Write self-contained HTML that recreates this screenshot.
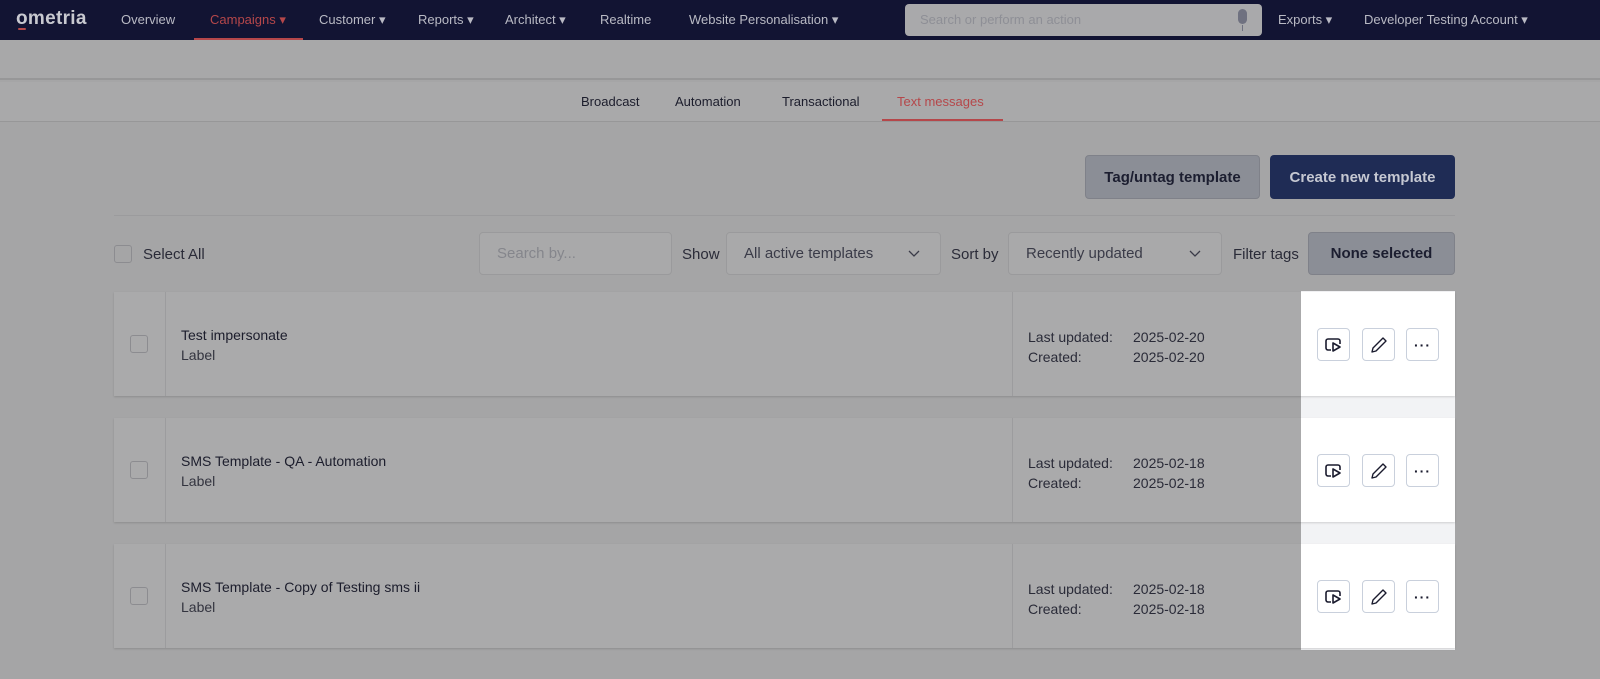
<!DOCTYPE html>
<html><head><style>
*{box-sizing:border-box;margin:0;padding:0}
body{width:1600px;height:679px;overflow:hidden;background:#a5a5a6;font-family:"Liberation Sans",sans-serif;position:relative;color:#1a1b2e}
.abs{position:absolute}
.nav{left:0;top:0;width:1600px;height:40px;background:#121433}
.nav span{position:absolute;top:12px;font-size:13px;color:#b9bac4}
.btn{position:absolute;border-radius:4px;font-weight:bold;font-size:15px;display:flex;align-items:center;justify-content:center}
.sel{position:absolute;border:1px solid #9a9a9c;border-radius:4px;background:#a9a9aa;font-size:15px;color:#3a3b48;padding-left:17px;display:flex;align-items:center}
.sel svg{position:absolute;right:20px;top:17px}
.card{position:absolute;left:114px;width:1341px;height:104px;background:#aaaaab;box-shadow:0 1px 2px rgba(0,0,0,.15)}
.card .cb{position:absolute;left:16px;top:43px;width:18px;height:18px;border:1.5px solid #8c8c90;border-radius:3px}
.card .v1{position:absolute;left:51px;top:0;width:1px;height:104px;background:#9c9c9e}
.card .v2{position:absolute;left:898px;top:0;width:1px;height:104px;background:#9c9c9e}
.card .t{position:absolute;left:67px;top:35px;font-size:14px;color:#1c1d2c}
.card .l{position:absolute;left:67px;top:55px;font-size:14px;color:#33343f}
.card .d{position:absolute;left:914px;top:35px;font-size:14px;line-height:20px;color:#2a2b38}
.card .d2{position:absolute;left:1019px;top:35px;font-size:14px;line-height:20px;color:#2a2b38}
.wh{position:absolute;left:1301px;width:154px;height:104px;background:#fff}
.ib{position:absolute;top:36px;width:33px;height:33px;border:1px solid #c9d0dc;border-radius:4px;background:#fff;display:flex;align-items:center;justify-content:center}
</style></head><body>
<div class="abs nav">
<span style="left:16px;top:8px;font-size:19px;font-weight:bold;color:#c8c9d0;letter-spacing:0.3px">ometria</span>
<div class="abs" style="left:18px;top:28px;width:8px;height:2px;background:#b84a4a;border-radius:1px"></div>
<span style="left:121px">Overview</span>
<span style="left:210px;color:#b5474a">Campaigns ▾</span>
<div class="abs" style="left:194px;top:38px;width:109px;height:2px;background:#b5474a"></div>
<span style="left:319px">Customer ▾</span>
<span style="left:418px">Reports ▾</span>
<span style="left:505px">Architect ▾</span>
<span style="left:600px">Realtime</span>
<span style="left:689px">Website Personalisation ▾</span>
<div class="abs" style="left:905px;top:4px;width:357px;height:32px;background:#a9a9ab;border-radius:4px"></div>
<span style="left:920px;top:12px;color:#8e8f96">Search or perform an action</span>
<div class="abs" style="left:1238px;top:9px;width:9px;height:15px;border-radius:5px;background:#6f7180"></div>
<div class="abs" style="left:1242px;top:25px;width:1px;height:6px;background:#6f7180"></div>
<span style="left:1278px">Exports ▾</span>
<span style="left:1364px">Developer Testing Account ▾</span>
</div>
<div class="abs" style="left:0;top:40px;width:1600px;height:40px;background:#a8a8a9;border-bottom:2px solid #979798"></div>
<div class="abs" style="left:0;top:82px;width:1600px;height:40px;background:#a9a9aa;border-bottom:1px solid #979798"></div>
<div class="abs" style="top:94px;left:581px;font-size:13px;color:#1c1d2c">Broadcast</div>
<div class="abs" style="top:94px;left:675px;font-size:13px;color:#1c1d2c">Automation</div>
<div class="abs" style="top:94px;left:782px;font-size:13px;color:#1c1d2c">Transactional</div>
<div class="abs" style="top:94px;left:897px;font-size:13px;color:#b5474a">Text messages</div>
<div class="abs" style="left:882px;top:119px;width:121px;height:2px;background:#b5474a"></div>
<div class="btn" style="left:1085px;top:155px;width:175px;height:44px;background:#8b8e96;border:1px solid #7f8189;color:#1c1e30">Tag/untag template</div>
<div class="btn" style="left:1270px;top:155px;width:185px;height:44px;background:#1f2c55;color:#c5c8d2">Create new template</div>
<div class="abs" style="left:114px;top:215px;width:1341px;height:1px;background:#9b9b9d"></div>
<div class="abs" style="left:114px;top:245px;width:18px;height:18px;border:1.5px solid #8c8c90;border-radius:3px"></div>
<div class="abs" style="left:143px;top:246px;font-size:15px;color:#2a2b38">Select All</div>
<div class="sel" style="left:479px;top:232px;width:193px;height:43px;color:#85868c">Search by...</div>
<div class="abs" style="left:682px;top:246px;font-size:15px;color:#2a2b38">Show</div>
<div class="sel" style="left:726px;top:232px;width:215px;height:43px">All active templates<svg width="12" height="8" viewBox="0 0 12 8" fill="none" stroke="#3a3b48" stroke-width="1.3"><path d="M1 1l5 5 5-5"/></svg></div>
<div class="abs" style="left:951px;top:246px;font-size:15px;color:#2a2b38">Sort by</div>
<div class="sel" style="left:1008px;top:232px;width:214px;height:43px">Recently updated<svg width="12" height="8" viewBox="0 0 12 8" fill="none" stroke="#3a3b48" stroke-width="1.3"><path d="M1 1l5 5 5-5"/></svg></div>
<div class="abs" style="left:1233px;top:246px;font-size:15px;color:#2a2b38">Filter tags</div>
<div class="btn" style="left:1308px;top:232px;width:147px;height:43px;background:#8b8e96;border:1px solid #7f8189;color:#1c1e30">None selected</div>

<div class="wh" style="top:291px;height:359px;background:#f2f3f5"></div>

<div class="card" style="top:292px"><div class="cb"></div><div class="v1"></div><div class="v2"></div><div class="t">Test impersonate</div><div class="l">Label</div><div class="d">Last updated:<br>Created:</div><div class="d2">2025-02-20<br>2025-02-20</div></div>
<div class="card" style="top:418px"><div class="cb"></div><div class="v1"></div><div class="v2"></div><div class="t">SMS Template - QA - Automation</div><div class="l">Label</div><div class="d">Last updated:<br>Created:</div><div class="d2">2025-02-18<br>2025-02-18</div></div>
<div class="card" style="top:544px"><div class="cb"></div><div class="v1"></div><div class="v2"></div><div class="t">SMS Template - Copy of Testing sms ii</div><div class="l">Label</div><div class="d">Last updated:<br>Created:</div><div class="d2">2025-02-18<br>2025-02-18</div></div>

<div class="wh" style="top:292px"></div>
<div class="wh" style="top:418px"></div>
<div class="wh" style="top:544px"></div>

<div class="abs" style="left:1301px;top:292px">
<div class="ib" style="left:16px"><svg width="18" height="16" viewBox="0 0 18 16" fill="none" stroke="#1a1b2e" stroke-width="1.6" stroke-linejoin="round"><path d="M6 13H3a2 2 0 0 1-2-2V4a2 2 0 0 1 2-2h10a2 2 0 0 1 2 2v3"/><path d="M8 6v8l7-4z"/></svg></div>
<div class="ib" style="left:61px"><svg width="18" height="18" viewBox="0 0 18 18" fill="none" stroke="#1a1b2e" stroke-width="1.4" stroke-linejoin="round"><path d="M13 2l3 3L6 15l-4 1 1-4z"/></svg></div>
<div class="ib" style="left:105px;font-size:14px;font-weight:bold;letter-spacing:1px">···</div>
</div>
<div class="abs" style="left:1301px;top:418px">
<div class="ib" style="left:16px"><svg width="18" height="16" viewBox="0 0 18 16" fill="none" stroke="#1a1b2e" stroke-width="1.6" stroke-linejoin="round"><path d="M6 13H3a2 2 0 0 1-2-2V4a2 2 0 0 1 2-2h10a2 2 0 0 1 2 2v3"/><path d="M8 6v8l7-4z"/></svg></div>
<div class="ib" style="left:61px"><svg width="18" height="18" viewBox="0 0 18 18" fill="none" stroke="#1a1b2e" stroke-width="1.4" stroke-linejoin="round"><path d="M13 2l3 3L6 15l-4 1 1-4z"/></svg></div>
<div class="ib" style="left:105px;font-size:14px;font-weight:bold;letter-spacing:1px">···</div>
</div>
<div class="abs" style="left:1301px;top:544px">
<div class="ib" style="left:16px"><svg width="18" height="16" viewBox="0 0 18 16" fill="none" stroke="#1a1b2e" stroke-width="1.6" stroke-linejoin="round"><path d="M6 13H3a2 2 0 0 1-2-2V4a2 2 0 0 1 2-2h10a2 2 0 0 1 2 2v3"/><path d="M8 6v8l7-4z"/></svg></div>
<div class="ib" style="left:61px"><svg width="18" height="18" viewBox="0 0 18 18" fill="none" stroke="#1a1b2e" stroke-width="1.4" stroke-linejoin="round"><path d="M13 2l3 3L6 15l-4 1 1-4z"/></svg></div>
<div class="ib" style="left:105px;font-size:14px;font-weight:bold;letter-spacing:1px">···</div>
</div>
</body></html>
